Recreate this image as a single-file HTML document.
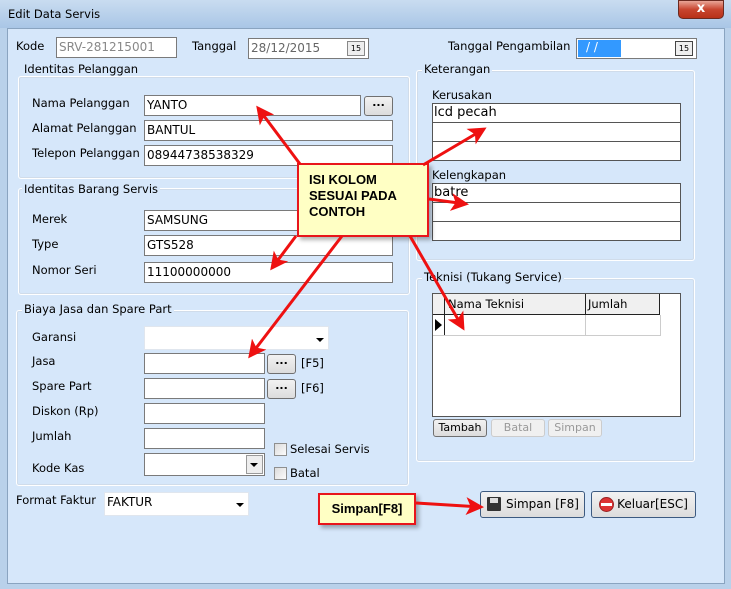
<!DOCTYPE html>
<html><head><meta charset="utf-8"><style>
*{box-sizing:border-box;margin:0;padding:0}
body{width:731px;height:589px;overflow:hidden;background:#b9d1ea;font-family:"DejaVu Sans",sans-serif;font-size:11px;color:#000;position:relative}
.a{position:absolute}
.t{position:absolute;white-space:nowrap;line-height:13px;font-size:11.5px!important}
.in{position:absolute;background:#fff;border:1px solid #7a7a7a;height:21px;padding:2px 2px;line-height:15px;font-size:12px}
.grp{position:absolute;border:1px solid #fff;box-shadow:inset 0 0 0 1px #d0dcea;border-radius:3px}
.gt{position:absolute;background:#d6e7fa;padding:0 2px;line-height:13px;white-space:nowrap;font-size:11.5px!important}
.btn{position:absolute;border:1px solid #707070;border-radius:3px;background:linear-gradient(#f2f2f2,#dcdcdc);text-align:center;font-weight:bold;line-height:12px}
.cb{position:absolute;width:13px;height:13px;border:1px solid #8e8f8f;background:linear-gradient(135deg,#dcdcdc,#fbfbfb)}
.dd{position:absolute;width:0;height:0;border-left:4px solid transparent;border-right:4px solid transparent;border-top:4px solid #000}
</style></head><body>
<div class="a" style="left:0;top:0;width:731px;height:28px;background:linear-gradient(#c9dcf0,#a9c6e6)"></div>
<div class="t" style="left:8px;top:8px;font-size:12px">Edit Data Servis</div>
<div class="a" style="left:678px;top:0;width:46px;height:19px;border:1px solid #6b2a20;border-radius:0 0 5px 5px;background:linear-gradient(#e9a597,#c8452f 50%,#b83118);color:#fff;text-align:center;font-weight:bold;font-size:13px;line-height:16px">x</div>
<div class="a" style="left:7px;top:28px;width:718px;height:556px;background:#d6e7fa;border:1px solid #8aa4c0"></div>

<div class="t" style="left:16px;top:40px;font-size:12px">Kode</div>
<div class="in" style="left:56px;top:37px;width:121px;color:#888">SRV-281215001</div>
<div class="t" style="left:192px;top:40px;font-size:12px">Tanggal</div>
<div class="in" style="left:248px;top:38px;width:121px;color:#666">28/12/2015</div>
<div class="a" style="left:347px;top:41px;width:18px;height:15px;border:1px solid #888;background:#eee;font-size:8px;text-align:center;line-height:13px">15</div>
<div class="t" style="left:448px;top:40px;font-size:12px">Tanggal Pengambilan</div>
<div class="in" style="left:576px;top:38px;width:121px"></div>
<div class="a" style="left:578px;top:40px;width:43px;height:17px;background:#3399ff;color:#fff;font-size:12px;padding-left:8px">/ /</div>
<div class="a" style="left:675px;top:41px;width:18px;height:15px;border:1px solid #444;background:#eee;font-size:8px;text-align:center;line-height:13px">15</div>

<div class="grp" style="left:18px;top:76px;width:392px;height:103px"></div>
<div class="gt" style="left:22px;top:63px;font-size:12px">Identitas Pelanggan</div>
<div class="t" style="left:32px;top:97px;font-size:12px">Nama Pelanggan</div>
<div class="in" style="left:144px;top:95px;width:217px">YANTO</div>
<div class="btn" style="left:364px;top:96px;width:29px;height:20px">...</div>
<div class="t" style="left:32px;top:122px;font-size:12px">Alamat Pelanggan</div>
<div class="in" style="left:144px;top:120px;width:249px">BANTUL</div>
<div class="t" style="left:32px;top:147px;font-size:12px">Telepon Pelanggan</div>
<div class="in" style="left:144px;top:145px;width:249px">08944738538329</div>

<div class="grp" style="left:18px;top:188px;width:392px;height:107px"></div>
<div class="gt" style="left:22px;top:183px;font-size:12px">Identitas Barang Servis</div>
<div class="t" style="left:32px;top:213px;font-size:12px">Merek</div>
<div class="in" style="left:144px;top:210px;width:249px">SAMSUNG</div>
<div class="t" style="left:32px;top:238px;font-size:12px">Type</div>
<div class="in" style="left:144px;top:235px;width:249px">GTS528</div>
<div class="t" style="left:32px;top:264px;font-size:12px">Nomor Seri</div>
<div class="in" style="left:144px;top:262px;width:249px">11100000000</div>

<div class="grp" style="left:16px;top:310px;width:393px;height:176px"></div>
<div class="gt" style="left:22px;top:303px;font-size:12px">Biaya Jasa dan Spare Part</div>
<div class="t" style="left:32px;top:331px;font-size:12px">Garansi</div>
<div class="in" style="left:144px;top:326px;width:185px;height:24px;border-color:#e0e6ee"></div><div class="dd" style="left:316px;top:338px"></div>
<div class="t" style="left:32px;top:355px;font-size:12px">Jasa</div>
<div class="in" style="left:144px;top:353px;width:121px"></div>
<div class="btn" style="left:267px;top:354px;width:29px;height:20px">...</div>
<div class="t" style="left:301px;top:357px;font-size:12px">[F5]</div>
<div class="t" style="left:32px;top:380px;font-size:12px">Spare Part</div>
<div class="in" style="left:144px;top:378px;width:121px"></div>
<div class="btn" style="left:267px;top:379px;width:29px;height:20px">...</div>
<div class="t" style="left:301px;top:382px;font-size:12px">[F6]</div>
<div class="t" style="left:32px;top:405px;font-size:12px">Diskon (Rp)</div>
<div class="in" style="left:144px;top:403px;width:121px"></div>
<div class="t" style="left:32px;top:430px;font-size:12px">Jumlah</div>
<div class="in" style="left:144px;top:428px;width:121px"></div>
<div class="t" style="left:32px;top:462px;font-size:12px">Kode Kas</div>
<div class="in" style="left:144px;top:453px;width:121px;height:23px"></div>
<div class="a" style="left:246px;top:455px;width:17px;height:19px;border:1px solid #999;background:#eee"></div><div class="dd" style="left:250px;top:463px"></div>
<div class="cb" style="left:274px;top:443px"></div><div class="t" style="left:290px;top:443px;font-size:12px">Selesai Servis</div>
<div class="cb" style="left:274px;top:467px"></div><div class="t" style="left:290px;top:467px;font-size:12px">Batal</div>

<div class="t" style="left:16px;top:494px;font-size:12px">Format Faktur</div>
<div class="in" style="left:104px;top:492px;width:145px;height:24px;border-color:#e0e6ee">FAKTUR</div><div class="dd" style="left:236px;top:503px"></div>

<div class="grp" style="left:416px;top:70px;width:279px;height:191px"></div>
<div class="gt" style="left:422px;top:63px;font-size:12px">Keterangan</div>
<div class="t" style="left:432px;top:89px;font-size:12px">Kerusakan</div>
<div class="a" style="left:432px;top:103px;width:249px;height:58px;border:1px solid #555;background:#fff"></div>
<div class="a" style="left:433px;top:122px;width:247px;height:1px;background:#555"></div>
<div class="a" style="left:433px;top:141px;width:247px;height:1px;background:#555"></div>
<div class="a" style="left:434px;top:105px;font-size:13px;white-space:nowrap">lcd pecah</div>
<div class="t" style="left:432px;top:169px;font-size:12px">Kelengkapan</div>
<div class="a" style="left:432px;top:183px;width:249px;height:58px;border:1px solid #555;background:#fff"></div>
<div class="a" style="left:433px;top:202px;width:247px;height:1px;background:#555"></div>
<div class="a" style="left:433px;top:221px;width:247px;height:1px;background:#555"></div>
<div class="a" style="left:434px;top:185px;font-size:13px;white-space:nowrap">batre</div>

<div class="grp" style="left:416px;top:278px;width:279px;height:184px"></div>
<div class="gt" style="left:422px;top:271px;font-size:12px">Teknisi (Tukang Service)</div>
<div class="a" style="left:432px;top:293px;width:249px;height:124px;border:1px solid #555;background:#fff"></div>
<div class="a" style="left:433px;top:294px;width:227px;height:21px;background:#f0f0f0;border-bottom:1px solid #222;border-right:1px solid #222"></div>
<div class="a" style="left:444px;top:294px;width:1px;height:42px;background:#222"></div>
<div class="a" style="left:585px;top:294px;width:1px;height:21px;background:#222"></div>
<div class="a" style="left:585px;top:315px;width:1px;height:21px;background:#ccc"></div>
<div class="a" style="left:433px;top:335px;width:227px;height:1px;background:#ccc"></div>
<div class="a" style="left:660px;top:315px;width:1px;height:21px;background:#ccc"></div>
<div class="t" style="left:448px;top:298px;font-size:12px">Nama Teknisi</div>
<div class="t" style="left:588px;top:298px;font-size:12px">Jumlah</div>
<div class="a" style="left:435px;top:319px;width:0;height:0;border-top:6px solid transparent;border-bottom:6px solid transparent;border-left:7px solid #000"></div>
<div class="btn" style="left:433px;top:419px;width:54px;height:18px;font-weight:normal;line-height:16px">Tambah</div>
<div class="btn" style="left:491px;top:419px;width:54px;height:18px;font-weight:normal;line-height:16px;color:#999;border-color:#ccc;background:#f0f0f0">Batal</div>
<div class="btn" style="left:548px;top:419px;width:54px;height:18px;font-weight:normal;line-height:16px;color:#999;border-color:#ccc;background:#f0f0f0">Simpan</div>

<div class="btn" style="left:480px;top:491px;width:105px;height:27px;border-color:#3c5a80;font-weight:normal;font-size:12px;line-height:25px;padding-left:20px">Simpan [F8]</div>
<div class="a" style="left:487px;top:497px;width:14px;height:14px;background:#333;border-radius:1px"></div>
<div class="a" style="left:490px;top:498px;width:8px;height:5px;background:#ddd"></div>
<div class="btn" style="left:591px;top:491px;width:105px;height:27px;border-color:#3c5a80;font-weight:normal;font-size:12px;line-height:25px;padding-left:18px">Keluar[ESC]</div>
<div class="a" style="left:599px;top:497px;width:15px;height:15px;border-radius:50%;background:#d33;border:1px solid #922"></div>
<div class="a" style="left:601px;top:503px;width:11px;height:3px;background:#fff"></div>

<div class="a" style="left:297px;top:163px;width:132px;height:74px;background:#ffffc4;border:2px solid #e8151b;box-shadow:3px 3px 4px rgba(0,0,0,.3);font-family:'Liberation Sans',sans-serif;font-weight:bold;font-size:13px;line-height:16px;padding:7px 0 0 10px">ISI KOLOM<br>SESUAI PADA<br>CONTOH</div>
<div class="a" style="left:318px;top:493px;width:98px;height:32px;background:#ffffc4;border:2px solid #e8151b;box-shadow:3px 3px 4px rgba(0,0,0,.3);font-family:'Liberation Sans',sans-serif;font-weight:bold;font-size:13px;line-height:28px;text-align:center">Simpan[F8]</div>

<svg class="a" style="left:0;top:0" width="731" height="589">
<defs><marker id="m" markerWidth="6" markerHeight="6" refX="5" refY="3" orient="auto" markerUnits="strokeWidth"><path d="M0,0 L6,3 L0,6 L1.5,3 z" fill="#ee1111"/></marker></defs>
<g stroke="#ee1111" stroke-width="3" fill="none" marker-end="url(#m)">
<line x1="300" y1="164" x2="258" y2="108"/>
<line x1="423" y1="165" x2="484" y2="129"/>
<line x1="429" y1="199" x2="466" y2="204"/>
<line x1="296" y1="236" x2="272" y2="268"/>
<line x1="342" y1="236" x2="250" y2="356"/>
<line x1="410" y1="236" x2="463" y2="328"/>
<line x1="416" y1="503" x2="481" y2="507"/>
</g></svg>
</body></html>
